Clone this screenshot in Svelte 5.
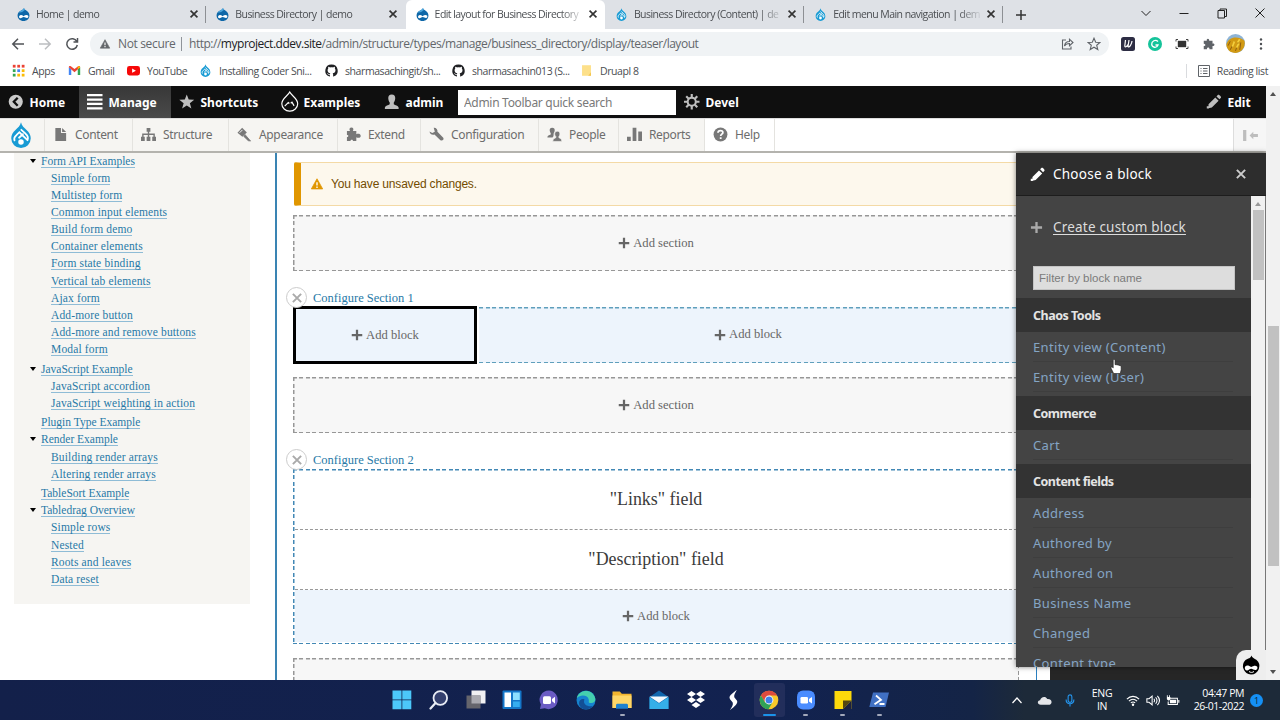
<script lang="ts">
  interface Tab {
    title: string;
    icon: 'druplicon' | 'drop';
    active?: boolean;
    divider?: boolean;
  }

  const tabs: Tab[] = [
    { title: 'Home | demo', icon: 'druplicon', divider: true },
    { title: 'Business Directory | demo', icon: 'druplicon' },
    { title: 'Edit layout for Business Directory', icon: 'druplicon', active: true },
    { title: 'Business Directory (Content) | de', icon: 'drop', divider: true },
    { title: 'Edit menu Main navigation | dem', icon: 'drop', divider: true },
  ];

  const bookmarks = [
    { label: 'Apps', icon: 'apps', width: 56 },
    { label: 'Gmail', icon: 'gmail', width: 59 },
    { label: 'YouTube', icon: 'youtube', width: 72 },
    { label: 'Installing Coder Sni...', icon: 'drop', width: 126 },
    { label: 'sharmasachingit/sh...', icon: 'github', width: 127 },
    { label: 'sharmasachin013 (S...', icon: 'github', width: 128 },
    { label: 'Druapl 8', icon: 'folder', width: 80 },
  ];

  const adminTabs = [
    { label: 'Home', icon: 'back', width: 79 },
    { label: 'Manage', icon: 'menu', width: 92 },
    { label: 'Shortcuts', icon: 'star', width: 103 },
    { label: 'Examples', icon: 'examples', width: 102 },
    { label: 'admin', icon: 'user', width: 82 },
  ];

  const tray = [
    { label: 'Content', icon: 'file', width: 88 },
    { label: 'Structure', icon: 'tree', width: 96 },
    { label: 'Appearance', icon: 'brush', width: 109 },
    { label: 'Extend', icon: 'puzzle', width: 83 },
    { label: 'Configuration', icon: 'wrench', width: 118 },
    { label: 'People', icon: 'people', width: 80 },
    { label: 'Reports', icon: 'bars', width: 86 },
    { label: 'Help', icon: 'help', width: 71 },
  ];

  const menu = [
    {
      label: 'Form API Examples',
      children: [
        'Simple form',
        'Multistep form',
        'Common input elements',
        'Build form demo',
        'Container elements',
        'Form state binding',
        'Vertical tab elements',
        'Ajax form',
        'Add-more button',
        'Add-more and remove buttons',
        'Modal form',
      ],
    },
    { label: 'JavaScript Example', children: ['JavaScript accordion', 'JavaScript weighting in action'] },
    { label: 'Plugin Type Example', children: [] },
    { label: 'Render Example', children: ['Building render arrays', 'Altering render arrays'] },
    { label: 'TableSort Example', children: [] },
    { label: 'Tabledrag Overview', children: ['Simple rows', 'Nested', 'Roots and leaves', 'Data reset'] },
  ];

  const categories = [
    { name: 'Chaos Tools', blocks: ['Entity view (Content)', 'Entity view (User)'] },
    { name: 'Commerce', blocks: ['Cart'] },
    {
      name: 'Content fields',
      blocks: ['Address', 'Authored by', 'Authored on', 'Business Name', 'Changed', 'Content type'],
    },
  ];

  const apps = [
    { name: 'start' },
    { name: 'search' },
    { name: 'taskview' },
    { name: 'widgets' },
    { name: 'chat' },
    { name: 'edge' },
    { name: 'explorer', open: true },
    { name: 'mail' },
    { name: 'dropbox' },
    { name: 'sync' },
    { name: 'chrome', open: true, focused: true },
    { name: 'zoom', open: true },
    { name: 'notes', open: true },
    { name: 'powershell', open: true },
  ];

  let filter = $state('');
  let search = $state('');
</script>

{#snippet glyph(name: string)}
  <svg class="glyph" viewBox="0 0 16 16" aria-hidden="true">
    {#if name === 'druplicon'}
      <path d="M8.6 0c.5 2 2 2.600 3.700 3.600 2 1.300 3 3.300 3 5.600 0 4-3.200 6.800-7.300 6.800S.7 13 .7 9.200C.7 6.500 2 4.700 4 3.600 6.200 2.500 8 2 8.600 0z" fill="#0e67a8" />
      <path d="M8.500.2C6.600 3 4 3 2.200 5.500 5 6 8 4.600 10 2.300z" fill="#4ba6dc" />
      <path d="M3 9.400c1.500-1.300 3.500-.7 5 .6 1.800-1.200 4-2.200 5.600-.8 1 1.200.2 3.100-1.300 3.100-1.600 0-2.600-1.100-4-1.200-1.500 0-2.500 1.700-4.100 1.500C2.700 12.400 2 10.700 3 9.400z" fill="#fff" />
    {:else if name === 'drop'}
      <path d="M8 .2c.5 2.300 2 3.400 3.400 4.700A7 7 0 0 1 14 10a6 6 0 0 1-12 0c0-2 1-3.800 2.600-5.100C6 3.600 7.500 2.500 8 .2z" fill="#189bd4" />
      <circle cx="8" cy="12.300" r="1.700" fill="#fff" />
      <path d="M4 11.300c-.6-1.400.2-2.300 1.200-3.200L7 6.300l5 4.900M6.800 9.700l2.400-2.200M8.200 4.800l2.600 2.400c1.200 1 1.800 2.500 1.200 4" stroke="#fff" stroke-width="1.100" fill="none" stroke-linecap="round" />
    {:else if name === 'apps'}
      {#each [0, 1, 2] as row}
        {#each [0, 1, 2] as col}
          <rect x={1 + col * 5.500} y={1 + row * 5.500} width="3.400" height="3.400" fill={[['#ea4335', '#ea4335', '#ea4335'], ['#34a853', '#4285f4', '#fbbc05'], ['#34a853', '#fbbc05', '#fbbc05']][row][col]} />
        {/each}
      {/each}
    {:else if name === 'gmail'}
      <path d="M1 13.500V4l3 2.200v7.300z" fill="#4285f4" />
      <path d="M12 13.500V6.200L15 4v9.500z" fill="#34a853" />
      <path d="M1 4c0-1.600 1.400-2 2.500-1.200L8 6.300l4.500-3.500C13.600 2 15 2.400 15 4l-7 6z" fill="#ea4335" />
      <path d="M12 6.500V3.200c1.300-1 3-.5 3 .8z" fill="#fbbc04" />
    {:else if name === 'youtube'}
      <rect x="0" y="2.500" width="16" height="11.500" rx="3" fill="#f60808" />
      <path d="m6.300 5.500 4.700 2.700-4.700 2.700z" fill="#fff" />
    {:else if name === 'github'}
      <path d="M8 .6a7.600 7.600 0 0 0-2.500 14.800c.4.100.5-.1.500-.4v-1.600c-2.100.4-2.600-.9-2.800-1.300-.2-.6-.7-.9-.8-1.100.8-.1 1.300.5 1.600 1 .6.900 1.500.8 2.100.5 0-.6.300-1 .5-1.200-2-.3-3.400-1-3.400-3.600 0-.9.300-1.600.8-2.200-.2-.5-.3-1.300.1-2.100.8 0 1.500.4 2.100.8 1.200-.3 2.500-.3 3.700 0 .6-.4 1.300-.8 2.100-.8.400.8.300 1.600.1 2.100.5.600.8 1.300.8 2.200 0 2.600-1.500 3.300-3.500 3.600.4.300.6.900.6 1.600V15c0 .3.100.5.500.4A7.600 7.600 0 0 0 8 .6z" fill="#202124" />
    {:else if name === 'folder'}
      <path d="M2.500 1.500h11v13h-11z" fill="#fde08a" />
      <path d="M10 14.500h3.500V10z" fill="#f3c651" />
    {:else if name === 'warning'}
      <path d="M8 1 15.600 14.600H.4z" fill="currentColor" stroke="currentColor" stroke-linejoin="round" />
      <path d="M8 5.500v4.400M8 11.200v2" stroke="#fff" stroke-width="1.800" />
    {:else if name === 'back'}
      <circle cx="8" cy="8" r="7.300" fill="#cacaca" />
      <path d="M10 3.800 6 8l4 4.200" stroke="#0f0f0f" stroke-width="2.400" fill="none" />
    {:else if name === 'menu'}
      <path d="M0 1.200h16M0 5.700h16M0 10.300h16M0 14.900h16" stroke="#fff" stroke-width="2.300" />
    {:else if name === 'star'}
      <path d="m8 .5 2 5.300 5.700.2-4.500 3.500 1.600 5.500L8 11.800 3.200 15l1.600-5.500L.3 6 6 5.800z" fill="#bebebe" />
    {:else if name === 'examples'}
      <path d="M8-2C9.800 1.700 16.200 4.700 16.200 10A8 7.800 0 0 1 8 17.700 8 7.800 0 0 1-.2 10C-.2 4.700 6.200 1.700 8-2z" fill="none" stroke="#fff" stroke-width="1.200" />
      <path d="M2.800 12.500 6.500 8.800l1.200.9M9 9.500l1.300-1 2.200 3.800" stroke="#fff" stroke-width="1.200" fill="none" />
    {:else if name === 'user'}
      <path d="M8 .4c2.500 0 3.700 1.700 3.600 4.100-.1 2-.7 3.300-1.500 4.400v1.600c1.500 1 4.400 1.300 5 3.500v1.500H.9V14c.6-2.200 3.500-2.500 5-3.500V8.900C5.100 7.800 4.500 6.500 4.400 4.500 4.300 2.100 5.500.4 8 .4z" fill="#bebebe" />
    {:else if name === 'gear'}
      <circle cx="8" cy="8" r="4.200" fill="none" stroke="#bebebe" stroke-width="2.100" />
      <path d="M8 0v3.500M8 12.500V16M0 8h3.500M12.500 8H16M2.300 2.300l2.500 2.500M11.200 11.200l2.500 2.500M2.300 13.700l2.500-2.500M11.200 4.800l2.500-2.500" stroke="#bebebe" stroke-width="2.200" />
    {:else if name === 'pencil'}
      <path d="M.8 12.600h2.300v2.300H.8zM2.600 10.700 9.600 3.600l3.400 3.300-7 7-3.400.7zM10.800 2.500l1.600-1.600c.9-.9 3.900 2.200 3 3L13.900 5.500z" fill="currentColor" />
    {:else if name === 'file'}
      <path d="M2.500 1h6v5.500H14V15H2.500zM9.700 1 14 5.400H9.700z" fill="#787878" />
    {:else if name === 'tree'}
      <path d="M6 1h4v4H6zM0 10.500h4v4.500H0zM6 10.500h4v4.500H6zM12 10.500h4v4.500h-4z" fill="#787878" />
      <path d="M8 4v7M2 11V7.700h12V11" stroke="#787878" stroke-width="1.500" fill="none" />
    {:else if name === 'brush'}
      <path d="M.5 6 5.500.8l5 5-4.800 4.600z" fill="#787878" />
      <path d="m2.800 6.100 3-3" stroke="#fff" />
      <path d="m8.500 8 6 7-2.500-.4-5-4.800z" fill="#787878" stroke="#787878" stroke-width=".8" />
    {:else if name === 'puzzle'}
      <path d="M1 4.300h3.300C3 2.500 4 .6 5.800.6S8.600 2.500 7.300 4.300H11v3.500c1.700-1 4.700-.6 4.700 1.700 0 2-2.900 2.700-4.700 1.400V15H7.300c.7-2-3-2-2.400 0H1v-4.300c1.700.7 2.200-2.800 0-2.200z" fill="#787878" />
    {:else if name === 'wrench'}
      <path d="M5 .7C7.500.4 9.500 2.500 9 5l6.200 6.500c1.300 1.700-1.300 4-3 2.600L5.800 8C3.500 9 .8 7.200.5 4.700l3 1.600L6.200 5z" fill="#787878" />
    {:else if name === 'people'}
      <path d="M5.500.8c2 0 3 1.200 2.700 3.200-.1 1-.5 1.800-1 2.400-.4 2 .3 3.300-1.300 4.800H.4C.3 9 2.300 8.800 4 8V6.700C3.400 6 3 5 2.900 4 2.700 2 3.600.8 5.500.8z" fill="#787878" />
      <path d="M11 4.500c2 0 3 1.300 2.700 3.200-.1 1-.5 1.700-1 2.300v1.400c1.300.8 3 .8 3.100 4H6.200c.1-3.200 1.900-3.200 3.200-4V10C8.700 9.400 8.300 8.700 8.200 7.700 8 5.800 9 4.500 11 4.500z" fill="#787878" stroke="#f6f5f2" stroke-width=".7" />
    {:else if name === 'bars'}
      <path d="M0 10.500h4V15H0zM6 .8h4V15H6zM12 4.800h4V15h-4z" fill="#787878" />
    {:else if name === 'help'}
      <circle cx="8" cy="8" r="7.400" fill="#787878" />
      <path d="M5.300 6.200C5.500 2.700 11 3.200 10.500 6.200 10.200 7.700 8.200 7.700 8.200 9.600M8.200 10.900v2" stroke="#fff" stroke-width="1.900" fill="none" />
    {:else if name === 'plus'}
      <path d="M8 1v14M1 8h14" stroke="currentColor" stroke-width="3" />
    {:else if name === 'cross'}
      <path d="m2.500 2.500 11 11M13.500 2.500l-11 11" stroke="currentColor" stroke-width="2.600" />
    {/if}
  </svg>
{/snippet}

{#snippet app(name: string)}
  <svg class="app-icon" viewBox="0 0 20 20" aria-hidden="true">
    {#if name === 'start'}
      <path d="M.5.500h9v9h-9zM10.300.500h9v9h-9zM.5 10.300h9v9h-9zM10.300 10.300h9v9h-9z" fill="#4cc8fa" />
    {:else if name === 'search'}
      <circle cx="11.300" cy="8" r="6.800" fill="#34406e" stroke="#e9edf5" stroke-width="1.800" />
      <path d="m6.500 13-5 5.500" stroke="#e9edf5" stroke-width="2.200" stroke-linecap="round" />
    {:else if name === 'taskview'}
      <path d="M5.500.500h14v13h-14z" fill="#f1f1f3" />
      <path d="M.5 5.500h14v13H.500z" fill="#65656c" />
      <path d="M5.500 5.500h9v8h-9z" fill="#aaaab0" />
    {:else if name === 'widgets'}
      <rect x=".5" y=".5" width="19" height="18.500" rx="1" fill="#1477c9" />
      <path d="M2.500 2.500h6.500v14.500H2.500z" fill="#fff" />
      <path d="M11 2.500h6.800v7.500H11z" fill="#8ce0ff" />
      <path d="M11 11.500h6.800V17H11z" fill="#35aef0" />
    {:else if name === 'chat'}
      <path d="M10 .500a9.300 9.300 0 1 1-4.300 17.800L1 19l.9-4.500A9.300 9.300 0 0 1 10 .500z" fill="#6b5cc4" />
      <rect x="4" y="6.300" width="8" height="7.700" rx="1.500" fill="#fff" />
      <path d="m13 9 3-2.200v6.600L13 11.300z" fill="#fff" />
    {:else if name === 'edge'}
      <circle cx="10" cy="10" r="9.500" fill="#1683cf" />
      <path d="M.7 8.300C2.500-1 17-2 19.300 8.500c.5 3-1.800 5-5 4.500-2.300-.4-1.300-1.500-1.500-3.300C12 5 4.500 4 .7 8.300z" fill="#45cfae" />
      <path d="M8.500 9.500c-2 4 2 8 8.500 6.500-4 5-13 4.500-14-2.500C3 9.800 6 8.300 8.500 9.500z" fill="#124f96" />
    {:else if name === 'explorer'}
      <path d="M.5 1.500h7.300l2 2.200h9.700V18H.5z" fill="#f3b52f" />
      <path d="M.5 5.500h19V18H.5z" fill="#ffd768" />
      <path d="M4 18.800v-3.500c0-1 .7-1.500 1.500-1.500h9c.8 0 1.500.5 1.500 1.500v3.500z" fill="#1f82cf" />
    {:else if name === 'mail'}
      <path d="m.5 7 9.500-6.500L19.500 7v12H.5z" fill="#0f66ad" />
      <path d="M.5 6.500h19L10 13z" fill="#f3f8fc" />
      <path d="M.5 7v12h19V7L10 13.500z" fill="#35afe8" />
    {:else if name === 'dropbox'}
      <path d="m5.500 1 4.500 3-4.500 3L1 4zM14.500 1 19 4l-4.500 3L10 4zM5.500 7l4.500 3-4.500 3L1 10zM14.500 7l4.500 3-4.500 3L10 10zM10 12l4.500 3-4.500 3-4.500-3z" fill="#fff" />
    {:else if name === 'sync'}
      <path d="M13.800 0C9.500 3 6.500 5.500 6.500 7.500c0 2 2.500 3.500 3.300 5.200C10.300 15 8.800 17 7 20c4.500-3 7.300-6 7.300-8.200 0-2-2.300-3-3-4.600C10.800 5.500 12 3 13.800 0z" fill="#fff" />
    {:else if name === 'chrome'}
      <circle cx="10" cy="10" r="9.300" fill="#f7c92a" />
      <path d="M1.900 5.400A9.300 9.300 0 0 1 18.100 5.400H10L6 12.300z" fill="#dd4b3e" />
      <path d="M1.900 5.400A9.300 9.300 0 0 0 9.500 19.300l4-7H6z" fill="#30a257" />
      <circle cx="10" cy="10" r="4.400" fill="#fff" />
      <circle cx="10" cy="10" r="3.500" fill="#3f7fe8" />
    {:else if name === 'zoom'}
      <rect x="1" y=".5" width="18" height="19" rx="6" fill="#4a8cff" />
      <rect x="4.500" y="7" width="7.500" height="6.500" rx="1.300" fill="#fff" />
      <path d="m13 9 3-2v6.500l-3-2z" fill="#fff" />
    {:else if name === 'notes'}
      <path d="M1.500 1h17v18h-17z" fill="#fcd90b" />
      <path d="M10 19v-8.500h8.500z" fill="#55470f" />
      <path d="M18.500 10.500V19H10z" fill="#1b2140" />
    {:else}
      <path d="M4 2.500h16L16.500 17H.3z" fill="#4070c4" />
      <path d="m7 5.500 5 4.300-6.500 4.500M10.500 14h5" stroke="#fff" stroke-width="1.800" fill="none" />
    {/if}
  </svg>
{/snippet}

{#snippet addLink(label: string)}
  <a class="add-link" href="#add">{@render glyph('plus')}{label}</a>
{/snippet}

<div class="screen">
  <header class="browser">
    <div class="tab-strip">
      {#each tabs as tab}
        <div class="tab" class:active={tab.active} class:divider={tab.divider}>
          {@render glyph(tab.icon)}
          <span class="tab-title">{tab.title}</span>
          <span class="tab-close">{@render glyph('cross')}</span>
        </div>
      {/each}
      <svg class="new-tab" viewBox="0 0 10 10"><path d="M5 0v10M0 5h10" stroke="#333" stroke-width="1.500" /></svg>
      <div class="window-controls">
        <svg viewBox="0 0 12 12"><path d="m1.500 4 4.500 4.500L10.500 4" /></svg>
        <svg viewBox="0 0 12 12"><path d="M1.500 6.500h9" /></svg>
        <svg viewBox="0 0 12 12"><path d="M2 3.500h6.500V11H2zM4 3.500V2h6.500v7.500h-2" /></svg>
        <svg viewBox="0 0 12 12"><path d="m1.500 1.500 9 9M10.500 1.500l-9 9" /></svg>
      </div>
    </div>

    <div class="address-row">
      <svg class="nav" viewBox="0 0 14 14"><path d="M13 7H2M7 1.800 1.800 7 7 12.200" stroke="#505357" /></svg>
      <svg class="nav" viewBox="0 0 14 14"><path d="M1 7h11M7 1.800 12.200 7 7 12.200" stroke="#bcbec1" /></svg>
      <svg class="nav" viewBox="0 0 14 14"><path d="M11.800 4.500A5.300 5.300 0 1 0 12.300 8M12.500 1v4H8.500" stroke="#505357" /></svg>
      <div class="omnibox">
        <span class="insecure">{@render glyph('warning')}</span>
        <span class="not-secure">Not secure</span>
        <span class="bar"></span>
        <span class="url">http://<b>myproject.ddev.site</b>/admin/structure/types/manage/business_directory/display/teaser/layout</span>
        <svg class="omni-icon" viewBox="0 0 14 14"><path d="M6 3H2.500v9h8.500V9.500M4.500 9c.3-3 2-4.500 5-4.500V2.200L13 5.500 9.500 8.700V6.500C7 6.500 5.500 7.300 4.500 9z" /></svg>
        <svg class="omni-icon" viewBox="0 0 14 14"><path d="m7 1.200 1.700 4 4.300.3-3.300 2.800 1.100 4.200L7 10.200l-3.800 2.300 1.100-4.200L1 5.500l4.300-.3z" /></svg>
      </div>
      <div class="extensions">
        <svg viewBox="0 0 14 14"><rect width="14" height="14" rx="2.500" fill="#2d2d44" /><path d="M4.500 3 3.800 9c0 1.500 2 1 3.200-1.500M8 3 7 9.500C8.500 11 10.800 7 11 4" stroke="#fff" stroke-width="1.200" fill="none" /></svg>
        <svg viewBox="0 0 14 14"><circle cx="7" cy="7" r="7" fill="#15c39a" /><path d="M10 4.500C7.500 2 3.500 4 3.700 7.300c.3 3.400 5 4.200 6.300.7H7.500" stroke="#fff" stroke-width="1.300" fill="none" /></svg>
        <svg viewBox="0 0 14 14"><path d="M2.800 3.800h8.400v6.400H2.800z" fill="#333" /><path d="M1 4.500V2.500h2M11 2.500h2v2M1 9.500v2h2M11 11.500h2v-2" stroke="#444" fill="none" /></svg>
        <svg viewBox="0 0 16 16"><path d="M2 4.300h3.500C4.700 1.200 8.800 1.200 8.200 4.300H12v3.300c3-.7 3 3.300 0 2.700V14H8.500c.5-2.500-3.300-2.500-2.800 0H2v-3.700c2.500.4 2.500-3 0-2.700z" fill="#5f6368" /></svg>
        <svg class="avatar" viewBox="0 0 18 18"><circle cx="9" cy="9" r="9" fill="#8eb4d6" /><path d="M.3 10C2 3 11 1 17.500 6.500 19 14 13 18 9 18 4 18 .8 15 .3 10z" fill="#d29a13" /><path d="m4 15 4-8M9 16l3-9M13 15l1-7M2 11l2-4" stroke="#8a5a10" stroke-width=".9" /><path d="m6 12 2-5M11 8l2-3M10 13l2-4" stroke="#f5cf3c" stroke-width="1.600" /></svg>
        <svg class="kebab" viewBox="0 0 4 14"><circle cx="2" cy="2.500" r="1.200" /><circle cx="2" cy="7" r="1.200" /><circle cx="2" cy="11.500" r="1.200" /></svg>
      </div>
    </div>

    <nav class="bookmarks">
      {#each bookmarks as bookmark}
        <span class="bookmark" style="width: {bookmark.width}px">{@render glyph(bookmark.icon)}{bookmark.label}</span>
      {/each}
      <span class="reading-list">
        <svg viewBox="0 0 12 12"><path d="M.5.500h11v11H.500zM2.500 3.500h1M2.500 6h1M2.500 8.500h1M5 3.500h4.500M5 6h4.500M5 8.500h4.500" /></svg>
        Reading list
      </span>
    </nav>
  </header>

  <div class="viewport">
    <div class="page">
      <nav class="admin-bar">
        {#each adminTabs as item}
          <a class="admin-tab" class:active={item.label === 'Manage'} href="#admin" style="width: {item.width}px">
            {@render glyph(item.icon)}{item.label}
          </a>
        {/each}
        <input class="quick-search" placeholder="Admin Toolbar quick search" bind:value={search} />
        <a class="admin-tab devel" href="#devel">{@render glyph('gear')}Devel</a>
        <a class="admin-tab edit" href="#edit">{@render glyph('pencil')}Edit</a>
      </nav>

      <nav class="tray">
        <a class="tray-logo" href="#home">{@render glyph('drop')}</a>
        {#each tray as item}
          <a class="tray-item" class:plain={item.icon === 'help'} href="#tray" style="width: {item.width}px">
            {@render glyph(item.icon)}{item.label}
          </a>
        {/each}
        <span class="orientation">
          <svg viewBox="0 0 18 14"><path d="M1 1h3.500v12H1zM8 7l4-4v2.300h5v3.400h-5V11z" /></svg>
        </span>
      </nav>

      <div class="content">
        <aside class="sidebar">
          <ul class="menu">
            {#each menu as item}
              <li class:expanded={item.children.length > 0}>
                <a href="#menu">{item.label}</a>
                {#if item.children.length > 0}
                  <ul>
                    {#each item.children as child}
                      <li><a href="#menu">{child}</a></li>
                    {/each}
                  </ul>
                {/if}
              </li>
            {/each}
          </ul>
        </aside>

        <main class="builder">
          <div class="message">
            {@render glyph('warning')}
            You have unsaved changes.
          </div>
          <div class="add-section dashed">{@render addLink('Add section')}</div>

          <div class="section-head">
            <button class="remove" aria-label="Remove section">{@render glyph('cross')}</button>
            <a href="#section">Configure Section 1</a>
          </div>
          <div class="section two-col">
            <div class="region highlighted">{@render addLink('Add block')}</div>
            <div class="region dashed">{@render addLink('Add block')}</div>
          </div>

          <div class="add-section dashed">{@render addLink('Add section')}</div>

          <div class="section-head">
            <button class="remove" aria-label="Remove section">{@render glyph('cross')}</button>
            <a href="#section">Configure Section 2</a>
          </div>
          <div class="section one-col dashed">
            <div class="field">"Links" field</div>
            <div class="field">"Description" field</div>
            <div class="region">{@render addLink('Add block')}</div>
          </div>

          <div class="add-section dashed last"></div>
        </main>
        <div class="gutter"></div>
      </div>

      <section class="off-canvas">
        <header class="panel-head">
          {@render glyph('pencil')}
          <h2>Choose a block</h2>
          <span class="panel-close">{@render glyph('cross')}</span>
        </header>
        <div class="panel-body">
          <div class="panel-scroll">
            <a class="create" href="#create">
              <svg viewBox="0 0 14 14"><path d="M7 1v12M1 7h12" /></svg>
              <span>Create custom block</span>
            </a>
            <input class="filter" placeholder="Filter by block name" bind:value={filter} />
            {#each categories as category}
              <h3>{category.name}</h3>
              <ul class="blocks">
                {#each category.blocks as block}
                  <li><a href="#block">{block}</a></li>
                {/each}
              </ul>
            {/each}
          </div>
          <div class="scrollbar inner">
            <span class="arrow up"></span>
            <span class="thumb"></span>
          </div>
        </div>
      </section>

      <div class="debug-badge">
        <svg viewBox="0 0 20 20"><path d="M10.500.500c.5 2.200 3 3 4.800 4.300A8.300 8.300 0 0 1 10 19.500 8.500 8.500 0 0 1 4.500 5C7 3.500 10 3 10.500.500z" fill="#000" /><path d="M4.200 11.500c1.800-1.700 4-.7 6 .6 2.200-1.400 4.500-2 5.800-.6 1.200 1.600-.2 3.800-1.800 3.600-1.500 0-2.500-1.300-4-1.300-1.700.1-2.800 1.900-4.500 1.600-1.600-.2-2.500-2.500-1.500-3.900z" fill="#fff" /><path d="M8 16.500c1.500 1.200 3.500 1.200 5 0" stroke="#fff" fill="none" /></svg>
      </div>
      <svg class="cursor" viewBox="0 0 12 16"><path d="M3.500 15.500 1 10.500C0 9 1 8 2.200 8.800L3 9.500V1.500C3 .2 5 .2 5 1.500V6c2 0 6 .5 6.500 2v3.500l-1 4z" fill="#fff" stroke="#222" stroke-width=".7" /></svg>
    </div>
    <div class="scrollbar outer">
      <span class="arrow up"></span>
      <span class="thumb"></span>
      <span class="arrow down"></span>
    </div>
  </div>

  <footer class="taskbar">
    <div class="apps">
      {#each apps as item}
        <span class="app" class:open={item.open} class:focused={item.focused}>{@render app(item.name)}</span>
      {/each}
    </div>
    <div class="system">
      <svg class="chevron" viewBox="0 0 12 12"><path d="m1.500 8.500 4.500-5 4.500 5" /></svg>
      <svg class="cloud" viewBox="0 0 16 12"><path d="M4 10.500C0 10.500 0 6 3.300 5.800 4 2 9.200.8 11 4.500c3-.3 4.800 1.500 4.500 3.500-.3 1.800-1.500 2.500-3 2.500z" /></svg>
      <svg class="mic" viewBox="0 0 12 14"><path d="M6 1a2 2 0 0 1 2 2v4a2 2 0 0 1-4 0V3a2 2 0 0 1 2-2zM1.800 6c0 6 8.400 6 8.400 0M6 10.500v3" /></svg>
      <span class="lang"><span>ENG</span><span>IN</span></span>
      <svg class="wifi" viewBox="0 0 16 14"><path d="M1 5.500c4-4.300 10-4.300 14 0M3.300 7.700c3-2.800 6.400-2.800 9.400 0M5.500 9.800c1.800-1.500 3.200-1.500 5 0" /><circle cx="8" cy="11.800" r="1.400" /></svg>
      <svg class="speaker" viewBox="0 0 16 14"><path d="M1 5h2.500L7 2v10L3.500 9H1zM9 5c1 1.300 1 2.700 0 4M11 3.300c2 2.300 2 5 0 7.400M13 1.700c3 3.300 3 7.300 0 10.600" /></svg>
      <svg class="battery" viewBox="0 0 16 14"><path d="M4.500 4.500H13v7H2.500V8" /><path class="fill" d="M4.500 6h7v4h-7zM14 6.500h1.300v3H14zM1 1h1v2h1.500V1h1v2H5v2.500L3.500 7h-1L1 5.500z" /></svg>
      <span class="clock"><span>04:47 PM</span><span>26-01-2022</span></span>
      <span class="count">1</span>
    </div>
  </footer>
</div>

<style>
  :global(body) {
    margin: 0;
    overflow: hidden;
  }

  .screen {
    width: 1280px;
    height: 720px;
    display: flex;
    flex-direction: column;
    overflow: hidden;
    background: #fff;
    font-family: 'Open Sans', sans-serif;
  }

  .screen :global(*),
  .screen {
    box-sizing: border-box;
  }

  a {
    color: inherit;
    text-decoration: none;
  }

  svg {
    flex: none;
    display: block;
  }

  .glyph {
    width: 16px;
    height: 16px;
    overflow: visible;
  }

  /* browser chrome */
  .browser {
    height: 86px;
    flex: none;
    font-size: 11px;
    color: #4b4e52;
  }

  .tab-strip {
    display: flex;
    align-items: center;
    height: 29px;
    padding-left: 7px;
    background: #dee1e6;
  }

  .tab {
    width: 199.3px;
    height: 29px;
    display: flex;
    align-items: center;
    padding: 0 7px 1px 10px;
    position: relative;
  }

  .tab .glyph {
    width: 13px;
    height: 13px;
  }

  .tab.active {
    background: #fff;
    border-radius: 6px 6px 0 0;
  }

  .tab.divider::after {
    content: '';
    position: absolute;
    right: 0;
    top: 6px;
    width: 1px;
    height: 17px;
    background: #8d9094;
  }

  .tab-title {
    width: 147px;
    margin-left: 6px;
    white-space: nowrap;
    font-size: 10.500px;
    letter-spacing: -0.550px;
    mask-image: linear-gradient(90deg, #000 126px, transparent 150px);
  }

  .tab-close {
    margin-left: 6px;
    color: #333;
  }

  .tab .tab-close .glyph {
    width: 10px;
    height: 10px;
  }

  .new-tab {
    width: 10px;
    height: 10px;
    margin-left: 13px;
  }

  .window-controls {
    margin-left: auto;
    display: flex;
    gap: 26px;
    padding: 0 14px 4px 0;
  }

  .window-controls svg {
    width: 12px;
    height: 12px;
    fill: none;
    stroke: #222;
    stroke-width: 1;
  }

  .address-row {
    height: 29px;
    display: flex;
    align-items: center;
    padding-left: 11px;
  }

  .nav {
    width: 14px;
    height: 14px;
    margin-right: 13px;
    fill: none;
    stroke-width: 1.5;
  }

  .omnibox {
    width: 1019px;
    height: 24px;
    margin-left: -2px;
    padding: 0 8px 0 10px;
    display: flex;
    align-items: center;
    border-radius: 12px;
    background: #f0f3f5;
    font-size: 12px;
    color: #63676b;
  }

  .insecure .glyph {
    width: 10px;
    height: 10px;
  }

  .not-secure {
    width: 56px;
    margin-left: 8px;
    white-space: nowrap;
    letter-spacing: -0.35px;
  }

  .bar {
    width: 1px;
    height: 14px;
    margin: 0 7px;
    background: #90949a;
  }

  .url {
    flex: 1;
    white-space: nowrap;
    letter-spacing: -0.480px;
  }

  .url b {
    font-weight: 400;
    color: #202124;
  }

  .omni-icon {
    width: 14px;
    height: 14px;
    margin-left: 13px;
    fill: none;
    stroke: #5f6368;
    stroke-width: 1.1;
  }

  .extensions {
    display: flex;
    align-items: center;
    gap: 13px;
    margin-left: 12px;
  }

  .extensions svg {
    width: 14px;
    height: 14px;
  }

  .extensions .avatar {
    width: 19px;
    height: 19px;
    margin-left: -3px;
  }

  .extensions .kebab {
    width: 4px;
    fill: #4b4e52;
    margin-left: 1px;
  }

  .bookmarks {
    height: 25px;
    display: flex;
    align-items: center;
    padding: 0 12px;
    font-size: 10.5px;
    letter-spacing: -0.420px;
  }

  .bookmark,
  .reading-list {
    display: flex;
    align-items: center;
    white-space: nowrap;
  }

  .bookmark .glyph {
    width: 13px;
    height: 13px;
    margin-right: 7px;
  }

  .reading-list {
    margin-left: auto;
    gap: 7px;
    padding-left: 11px;
    border-left: 1px solid #d9dbde;
  }

  .reading-list svg {
    width: 12px;
    height: 12px;
    fill: none;
    stroke: #5f6368;
  }

  .viewport {
    height: 594px;
    flex: none;
    display: flex;
  }

  .page {
    position: relative;
    width: 1266px;
    height: 594px;
    overflow: hidden;
    font-family: 'Noto Sans', sans-serif;
  }

  /* admin toolbar */
  .admin-bar {
    height: 32px;
    display: flex;
    align-items: center;
    background: #0f0f0f;
    font-size: 12px;
    font-weight: 700;
    color: #fff;
  }

  .admin-tab {
    height: 32px;
    display: flex;
    align-items: center;
    gap: 6px;
    padding-left: 8px;
    white-space: nowrap;
  }

  .admin-tab.active {
    background: linear-gradient(#383838, #4a4a4a);
  }

  .admin-tab .glyph {
    width: 15.500px;
    height: 15.500px;
    color: #bebebe;
  }

  .quick-search {
    width: 218px;
    height: 25px;
    border: 0;
    padding: 0 6px;
    background: #fff;
    font: 12px 'Noto Sans', sans-serif;
    letter-spacing: -0.300px;
  }

  .quick-search::placeholder {
    color: #797979;
    opacity: 1;
  }

  .admin-tab.edit {
    width: 68px;
    margin-left: auto;
  }

  .tray {
    height: 35px;
    display: flex;
    background: #fff;
    border-top: 1px solid #dedede;
    border-bottom: 2px solid #b4b3ae;
    font-size: 12px;
    letter-spacing: -0.350px;
    color: #6d6d6d;
  }

  .tray-logo {
    width: 44px;
    display: flex;
    align-items: center;
    justify-content: center;
    padding-right: 3px;
    background: #f6f5f2;
  }

  .tray-logo .glyph {
    width: 26px;
    height: 26px;
  }

  .tray-item {
    display: flex;
    align-items: center;
    gap: 7px;
    padding: 0 0 2px 8px;
    background: #f6f5f2;
    border-left: 1px solid #e4e3df;
  }

  .tray-item.plain {
    background: #fff;
    border-right: 1px solid #e4e3df;
  }

  .tray-item .glyph {
    width: 15px;
    height: 15px;
  }

  .orientation {
    width: 33px;
    margin-left: auto;
    display: flex;
    align-items: center;
    justify-content: center;
    background: #f6f6f6;
    border-left: 1px solid #ddd;
  }

  .orientation svg {
    width: 17px;
    height: 13px;
    fill: #bdbdbd;
  }

  /* page body */
  .content {
    height: 527px;
    display: flex;
    background: #262626;
    font-family: 'Liberation Serif', serif;
    overflow: hidden;
  }

  .sidebar {
    width: 275px;
    flex: none;
    padding-left: 14px;
    background: #fff;
  }

  .sidebar > .menu {
    width: 236px;
    height: 451px;
    background: #f6f5f2;
  }

  .menu,
  .menu ul {
    margin: 0;
    padding: 0;
    list-style: none;
  }

  .menu {
    font-size: 11.500px;
    line-height: 17.080px;
    color: #2779a7;
  }

  .menu > li {
    padding-left: 27px;
  }

  .menu > .expanded::before {
    content: '';
    float: left;
    margin: 6px 0 0 -11px;
    border: 3px solid transparent;
    border-top: 4px solid #000;
    border-bottom: 0;
  }

  .menu li a {
    display: inline-block;
    height: 15px;
    line-height: 16px;
    vertical-align: top;
    border-bottom: 1px solid #8fbcd6;
  }

  .menu li {
    min-height: 17.080px;
  }

  .menu ul {
    padding: 0 0 2.600px 10px;
    letter-spacing: 0.150px;
  }

  .builder {
    width: 762px;
    flex: none;
    padding: 9px 17px 0 16px;
    background: #fff;
    border-left: 2px solid #3a84b3;
    border-right: 1px solid #2a7fc0;
    color: #666;
  }

  .gutter {
    width: 13px;
    background: #fff;
  }

  .message {
    height: 44px;
    width: 726px;
    margin-left: 1px;
    display: flex;
    align-items: center;
    gap: 8px;
    padding-left: 10px;
    border: 1px solid #f4daa6;
    border-left: 7px solid #e09600;
    border-radius: 2px 0 0 2px;
    background: #fdf8ed;
    font: 12px 'Liberation Sans', sans-serif;
    letter-spacing: -0.180px;
    color: #734c00;
  }

  .message .glyph {
    width: 12px;
    height: 12px;
    color: #e09600;
  }

  /* short 4px dashes on all four sides */
  .dashed {
    --dash: #979797;
    --row: repeating-linear-gradient(90deg, var(--dash) 0 4px, transparent 4px 6.500px);
    --col: repeating-linear-gradient(180deg, var(--dash) 0 4px, transparent 4px 6.500px);
    background-image: var(--row), var(--row), var(--col), var(--col);
    background-repeat: no-repeat;
    background-position: left top, left bottom, left top, right top;
    background-size: 100% 1.500px, 100% 1.500px, 1.500px 100%, 1.500px 100%;
  }

  .add-section {
    height: 56px;
    width: 726px;
    margin-top: 9px;
    display: grid;
    place-items: center;
    background-color: #f7f7f7;
  }

  .add-link {
    display: flex;
    align-items: center;
    gap: 3px;
    font-size: 12.600px;
  }

  .add-link .glyph {
    width: 12px;
    height: 12px;
  }

  .section-head {
    position: relative;
    z-index: 1;
    height: 36px;
    display: flex;
    align-items: flex-end;
    padding-left: 20px;
    font-size: 12.500px;
    line-height: 15px;
    color: #2779a7;
  }

  .section-head a {
    padding-bottom: 1px;
  }

  .remove {
    position: absolute;
    left: -7px;
    bottom: -1px;
    width: 21px;
    height: 21px;
    padding: 0;
    display: grid;
    place-items: center;
    border: 1px solid #ccc;
    border-radius: 50%;
    background: #fff;
    color: #aaa;
  }

  .remove .glyph {
    width: 12px;
    height: 12px;
  }

  .section {
    width: 726px;
  }

  .two-col {
    display: grid;
    grid-template-columns: 184px 1fr;
    column-gap: 2px;
    height: 56px;
    margin-bottom: 14px;
  }

  .region {
    display: grid;
    place-items: center;
    background-color: #edf4fc;
  }

  .two-col .dashed {
    --dash: #5f9fbc;
    height: 56px;
    padding: 0 2px 1px 0;
    background-size: 100% 1.500px, 100% 1.500px, 0 0, 1.500px 100%;
  }

  .two-col .highlighted {
    height: 58px;
    margin-top: -1px;
    border: 3px solid #000;
  }

  .one-col {
    --dash: #4288b5;
    height: 175px;
    padding: 2px;
  }

  .one-col.dashed {
    --dash: #4288b5;
  }

  .one-col .region {
    height: 52px;
  }

  .field {
    height: 60px;
    display: grid;
    place-items: center;
    padding-bottom: 1px;
    border-bottom: 1px dashed #999;
    font-size: 17.900px;
    color: #3b3b3b;
  }

  .field:first-child {
    height: 59px;
  }

  .add-section.last {
    margin-top: 14px;
  }

  /* off-canvas block picker */
  .off-canvas {
    position: absolute;
    left: 1016px;
    top: 67px;
    width: 250px;
    height: 514px;
    background: #444;
    box-shadow: 0 0 5px rgba(0, 0, 0, 0.5);
    color: #ddd;
  }

  .panel-head {
    height: 43px;
    display: flex;
    align-items: center;
    padding: 0 19px 0 14px;
    background: #2d2d2d;
    border-bottom: 1px solid #1d1d1d;
    color: #fff;
  }

  .panel-head .glyph {
    width: 15px;
    height: 15px;
  }

  .panel-head h2 {
    flex: 1;
    margin: 0 0 0 8px;
    font-size: 13.500px;
    font-weight: 400;
    letter-spacing: 0.250px;
  }

  .panel-head .panel-close {
    color: #ccc;
  }

  .panel-close .glyph {
    width: 12px;
    height: 12px;
  }

  .panel-body {
    display: flex;
    height: 471px;
    overflow: hidden;
  }

  .panel-scroll {
    width: 235px;
    padding-top: 19px;
  }

  .create {
    display: flex;
    align-items: center;
    gap: 10px;
    height: 24px;
    padding-left: 14px;
    font-size: 13.500px;
    letter-spacing: 0.200px;
  }

  .create span {
    text-decoration: underline;
    text-underline-offset: 2px;
  }

  .create svg {
    width: 13px;
    height: 13px;
    stroke: #aaa;
    stroke-width: 2.500;
  }

  .filter {
    display: block;
    width: 202px;
    height: 24px;
    margin: 27px 0 8px 17px;
    padding: 0 5px;
    border: 1px solid #c4c4c4;
    border-radius: 0;
    background: #ddd;
    font: 11.500px 'Liberation Sans', sans-serif;
  }

  .filter::placeholder {
    color: #7b7b7b;
    opacity: 1;
  }

  .panel-scroll h3 {
    height: 34px;
    margin: 0;
    padding-left: 17px;
    background: #333;
    font-size: 12.500px;
    line-height: 35px;
    letter-spacing: -0.500px;
    color: #e4e4e4;
  }

  .blocks {
    margin: 0 18px 4px 17px;
    padding: 0;
    list-style: none;
    font-size: 13px;
    letter-spacing: 0.350px;
    color: #85a5c4;
  }

  .blocks li {
    height: 30px;
    line-height: 30px;
    border-bottom: 1px solid #3e3e3e;
  }

  .scrollbar {
    display: flex;
    flex-direction: column;
    align-items: center;
    background: #f1f1f1;
  }

  .scrollbar .thumb {
    background: #c1c1c1;
  }

  .arrow {
    border: 3.500px solid transparent;
  }

  .arrow.up {
    border-bottom: 4px solid #505050;
    border-top: 0;
  }

  .arrow.down {
    border-top: 4px solid #505050;
    border-bottom: 0;
  }

  .inner {
    width: 15px;
    padding-top: 6px;
    border-right: 1px solid #777;
  }

  .inner .arrow.up {
    border-bottom-color: #999;
  }

  .inner .thumb {
    width: 11px;
    height: 70px;
    margin-top: 4px;
  }

  .outer {
    width: 14px;
    height: 594px;
    padding: 6px 0;
  }

  .outer .thumb {
    width: 11px;
    height: 240px;
    margin: 230px 0 auto;
  }

  .debug-badge {
    position: absolute;
    left: 1236px;
    top: 564px;
    width: 30px;
    height: 30px;
    display: grid;
    place-items: center;
    border-radius: 10px 0 0 0;
    background: #eee;
  }

  .debug-badge svg {
    width: 20px;
    height: 20px;
  }

  .cursor {
    position: absolute;
    left: 1110px;
    top: 273px;
    width: 12px;
    height: 15px;
  }

  /* taskbar */
  .taskbar {
    height: 40px;
    flex: none;
    display: flex;
    align-items: center;
    justify-content: space-between;
    padding: 0 17px 0 384px;
    background: linear-gradient(90deg, #13204a, #122250 60%, #142446 76%, #1d2a39 80%);
    color: #fff;
  }

  .apps {
    display: flex;
  }

  .app {
    position: relative;
    width: 36.700px;
    height: 40px;
    display: grid;
    place-items: center;
  }

  .app-icon {
    width: 20px;
    height: 20px;
  }

  .app.focused {
    height: 34px;
    margin: 3px 3px 0;
    width: 30.700px;
    border-radius: 3px;
    background: #222e5b;
  }

  .app.open::after {
    content: '';
    position: absolute;
    bottom: 4px;
    width: 5px;
    height: 2px;
    border-radius: 1px;
    background: #a3a9bb;
  }

  .app.focused::after {
    bottom: 1px;
    width: 13px;
    background: #1b93ea;
  }

  .system {
    display: flex;
    align-items: center;
    font-size: 10.500px;
    line-height: 13px;
  }

  .system svg {
    height: 13px;
    fill: none;
    stroke: #fff;
    stroke-width: 1.200;
  }

  .system .chevron {
    width: 12px;
    margin-right: 14px;
  }

  .system .cloud {
    width: 15px;
    margin-right: 12px;
    fill: #e4e6e9;
    stroke: none;
  }

  .system .mic {
    width: 12px;
    margin-right: 16px;
    stroke: #2494ec;
  }

  .system .wifi {
    width: 14px;
    margin: 0 6px 0 14px;
  }

  .system .wifi circle,
  .battery .fill {
    fill: #fff;
    stroke: none;
  }

  .system .speaker {
    width: 14px;
    margin-right: 6px;
  }

  .system .battery {
    width: 14px;
    margin-right: 13px;
  }

  .lang,
  .clock {
    display: flex;
    flex-direction: column;
    align-items: center;
  }

  .lang {
    width: 20px;
    letter-spacing: -0.300px;
  }

  .clock {
    width: 51px;
    align-items: flex-end;
    white-space: nowrap;
    letter-spacing: -0.450px;
  }

  .count {
    width: 13px;
    height: 13px;
    margin-left: 6px;
    border-radius: 50%;
    background: #1590f5;
    font-size: 9px;
    text-align: center;
    color: #123;
  }
</style>
